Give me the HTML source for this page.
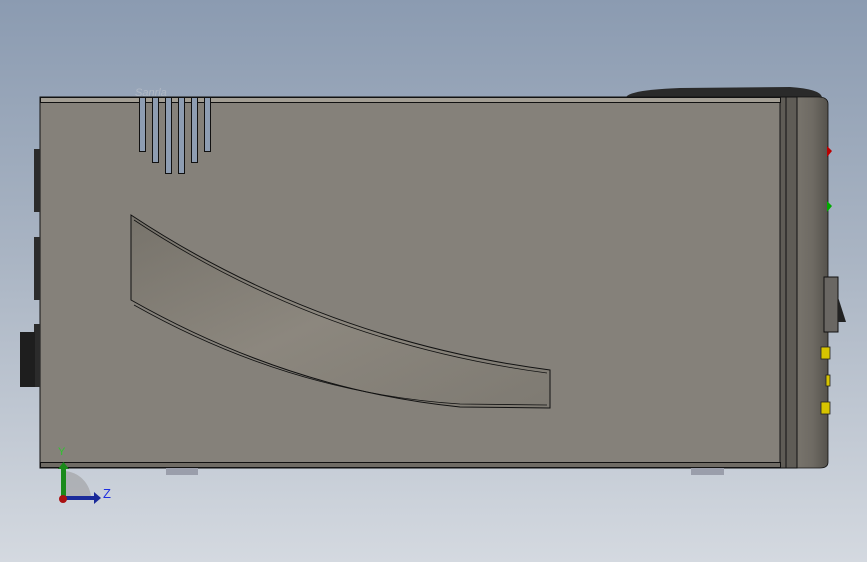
<!DOCTYPE html>
<html><head><style>
html,body{margin:0;padding:0;width:867px;height:562px;overflow:hidden}
body{background:linear-gradient(#8b9bb1 0%,#a9b4c3 45%,#d4d9e0 100%)}
</style></head><body>
<svg width="867" height="562" viewBox="0 0 867 562" style="position:absolute;left:0;top:0">
<defs>
<linearGradient id="cyl" x1="0" x2="1"><stop offset="0" stop-color="#7c7870"/><stop offset="0.6" stop-color="#6e6a63"/><stop offset="1" stop-color="#55524c"/></linearGradient>
<linearGradient id="sw" x1="0" y1="0" x2="1" y2="1"><stop offset="0" stop-color="#77736b"/><stop offset="0.5" stop-color="#8c877e"/><stop offset="1" stop-color="#7e7a72"/></linearGradient>
</defs>
<path d="M626 97 Q630 90 680 88 L790 87 Q820 89 822 97 Z" fill="#2a2a2a"/>
<path d="M790 97 L818 97 Q828 97 828 104 L828 462 Q828 468 820 468 L790 468 Z" fill="url(#cyl)" stroke="#111" stroke-width="0.8"/>
<rect x="780" y="97" width="17" height="371" fill="#5f5c56" stroke="#111" stroke-width="1"/>
<line x1="786" y1="97" x2="786" y2="468" stroke="#111"/>
<rect x="40" y="97" width="740" height="371" fill="#85817a" stroke="#111" stroke-width="1"/>
<rect x="40.5" y="97.5" width="740" height="5" fill="#a39e94" stroke="#111" stroke-width="1"/>
<rect x="40.5" y="462.5" width="740" height="5" fill="#6f6b64" stroke="#111" stroke-width="1"/>
<g fill="#8e9db2" stroke="#111" stroke-width="1">
<rect x="139.5" y="97.5" width="6" height="54"/>
<rect x="152.5" y="97.5" width="6" height="65"/>
<rect x="165.5" y="97.5" width="6" height="76"/>
<rect x="178.5" y="97.5" width="6" height="76"/>
<rect x="191.5" y="97.5" width="6" height="65"/>
<rect x="204.5" y="97.5" width="6" height="54"/>
</g>
<text x="135" y="96" font-family="Liberation Sans,sans-serif" font-size="11" fill="#b0b8c4" font-style="italic">Sanrla</text>
<rect x="34" y="149" width="6" height="63" fill="#2b2b2b"/>
<rect x="34" y="237" width="6" height="63" fill="#2b2b2b"/>
<rect x="34" y="324" width="6" height="63" fill="#2b2b2b"/>
<rect x="20" y="332" width="15" height="55" fill="#1e1e1e"/>
<path d="M131 215 Q320 340 550 370 L550 408 L460 407 Q290 390 131 300 Z" fill="url(#sw)" stroke="#111" stroke-width="1"/>
<path d="M134 220 Q320 343 547 373" fill="none" stroke="#111" stroke-width="0.8"/>
<path d="M134 305 Q290 393 460 404 L547 405" fill="none" stroke="#111" stroke-width="0.8"/>
<rect x="166" y="468" width="32" height="7" fill="#9a9eab"/>
<rect x="691" y="468" width="33" height="7" fill="#9a9eab"/>
<path d="M827 146 L832 151 L827 157 Z" fill="#b00"/>
<path d="M827 201 L832 206 L827 212 Z" fill="#0a0"/>
<rect x="824" y="277" width="14" height="55" fill="#6a6763" stroke="#111"/>
<path d="M838 297 L846 322 L838 322 Z" fill="#222"/>
<rect x="821" y="347" width="9" height="12" fill="#d7c400" stroke="#222" stroke-width="0.8"/>
<rect x="826" y="375" width="4" height="11" fill="#d7c400" stroke="#222" stroke-width="0.8"/>
<rect x="821" y="402" width="9" height="12" fill="#d7c400" stroke="#222" stroke-width="0.8"/>
<path d="M63 471 A28 28 0 0 1 91 499 L63 499 Z" fill="#a7a9ad" opacity="0.8"/>
<rect x="61" y="467" width="5" height="32" fill="#1a8a1a"/>
<path d="M58 469 L63.5 462 L69 469 Z" fill="#1a8a1a"/>
<rect x="63" y="496" width="33" height="4" fill="#1a2a9a"/>
<path d="M94 492 L101 498 L94 504 Z" fill="#1a2a9a"/>
<circle cx="63" cy="499" r="4" fill="#aa1111"/>
<text x="58" y="455" font-family="Liberation Sans,sans-serif" font-size="11" fill="#2ec42e">Y</text>
<text x="103" y="498" font-family="Liberation Sans,sans-serif" font-size="13" fill="#1d2ee0">Z</text>
</svg>
</body></html>
